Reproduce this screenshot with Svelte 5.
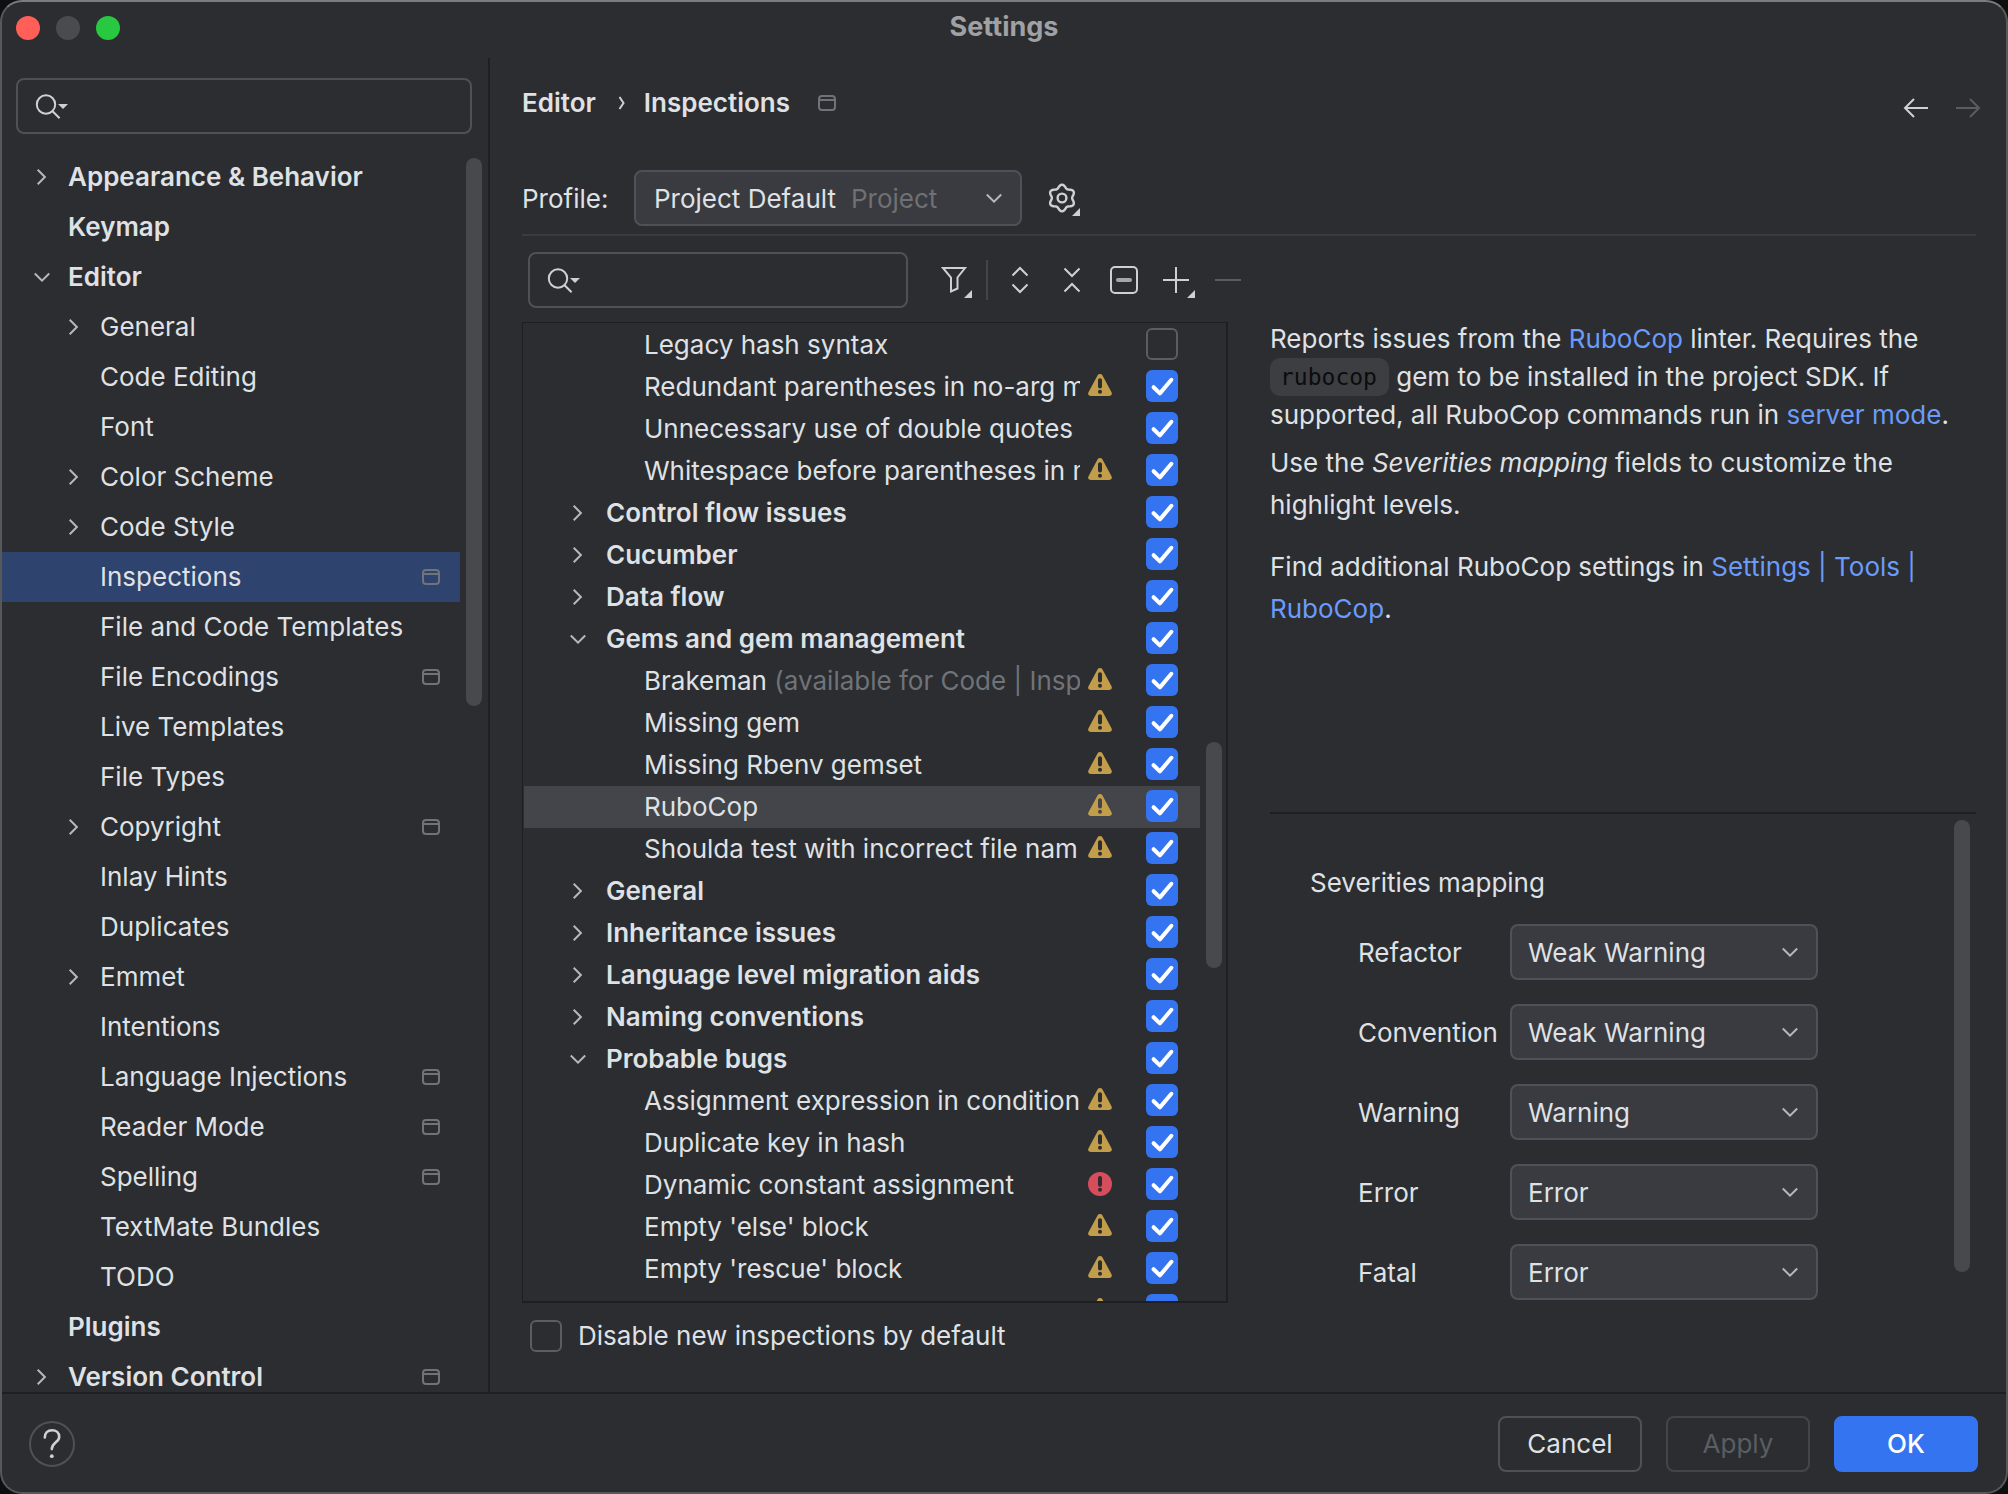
<script lang="ts">
  type NavItem = { label: string; level?: number; open?: boolean; arrow?: boolean; badge?: boolean; selected?: boolean };
  type Inspection = {
    label: string;
    note?: string;
    group?: boolean;
    open?: boolean;
    level?: 'warning' | 'error';
    checked: boolean;
    selected?: boolean;
  };

  const nav: NavItem[] = [
    { label: 'Appearance & Behavior', level: 0, arrow: true },
    { label: 'Keymap', level: 0 },
    { label: 'Editor', level: 0, arrow: true, open: true },
    { label: 'General', arrow: true },
    { label: 'Code Editing' },
    { label: 'Font' },
    { label: 'Color Scheme', arrow: true },
    { label: 'Code Style', arrow: true },
    { label: 'Inspections', badge: true, selected: true },
    { label: 'File and Code Templates' },
    { label: 'File Encodings', badge: true },
    { label: 'Live Templates' },
    { label: 'File Types' },
    { label: 'Copyright', arrow: true, badge: true },
    { label: 'Inlay Hints' },
    { label: 'Duplicates' },
    { label: 'Emmet', arrow: true },
    { label: 'Intentions' },
    { label: 'Language Injections', badge: true },
    { label: 'Reader Mode', badge: true },
    { label: 'Spelling', badge: true },
    { label: 'TextMate Bundles' },
    { label: 'TODO' },
    { label: 'Plugins', level: 0 },
    { label: 'Version Control', level: 0, arrow: true, badge: true }
  ];

  let inspections = $state<Inspection[]>([
    { label: 'Legacy hash syntax', checked: false },
    { label: 'Redundant parentheses in no-arg m', level: 'warning', checked: true },
    { label: 'Unnecessary use of double quotes', checked: true },
    { label: 'Whitespace before parentheses in m', level: 'warning', checked: true },
    { label: 'Control flow issues', group: true, checked: true },
    { label: 'Cucumber', group: true, checked: true },
    { label: 'Data flow', group: true, checked: true },
    { label: 'Gems and gem management', group: true, open: true, checked: true },
    { label: 'Brakeman', note: '(available for Code | Insp', level: 'warning', checked: true },
    { label: 'Missing gem', level: 'warning', checked: true },
    { label: 'Missing Rbenv gemset', level: 'warning', checked: true },
    { label: 'RuboCop', level: 'warning', checked: true, selected: true },
    { label: 'Shoulda test with incorrect file nam', level: 'warning', checked: true },
    { label: 'General', group: true, checked: true },
    { label: 'Inheritance issues', group: true, checked: true },
    { label: 'Language level migration aids', group: true, checked: true },
    { label: 'Naming conventions', group: true, checked: true },
    { label: 'Probable bugs', group: true, open: true, checked: true },
    { label: 'Assignment expression in condition', level: 'warning', checked: true },
    { label: 'Duplicate key in hash', level: 'warning', checked: true },
    { label: 'Dynamic constant assignment', level: 'error', checked: true },
    { label: "Empty 'else' block", level: 'warning', checked: true },
    { label: "Empty 'rescue' block", level: 'warning', checked: true },
    { label: '', level: 'warning', checked: true }
  ]);

  let disableNew = $state(false);

  const levels = ['Error', 'Warning', 'Weak Warning'];
  let severities = $state([
    { name: 'Refactor', value: 'Weak Warning' },
    { name: 'Convention', value: 'Weak Warning' },
    { name: 'Warning', value: 'Warning' },
    { name: 'Error', value: 'Error' },
    { name: 'Fatal', value: 'Error' }
  ]);

  // Six-lobed cog outline around (16, 16), one lobe pointing up.
  const cog =
    'M' +
    Array.from({ length: 72 }, (_, i) => {
      const a = (i / 72) * Math.PI * 2;
      const r = 11.7 + 1.6 * Math.cos(6 * a);
      return `${(16 + r * Math.sin(a)).toFixed(2)} ${(16 - r * Math.cos(a)).toFixed(2)}`;
    }).join('L') +
    'Z';
</script>

{#snippet chevron(open: boolean)}
  <svg class="chev" width="24" height="24" viewBox="0 0 24 24" aria-hidden="true">
    {#if open}<path d="M4.8 8.5 12 15.7 19.2 8.5" />{:else}<path d="M7.7 4.8 14.9 12 7.7 19.2" />{/if}
  </svg>
{/snippet}

{#snippet projectBadge()}
  <svg class="badge" width="20" height="20" viewBox="0 0 20 20" aria-hidden="true">
    <rect x="2" y="3" width="16" height="14" rx="3" /><path d="M2 7h16" />
  </svg>
{/snippet}

{#snippet searchGlyph()}
  <svg class="glyph" width="34" height="28" viewBox="0 0 34 28" aria-hidden="true">
    <circle cx="12" cy="12.5" r="9.2" /><path d="m18.6 19.2 7 7" />
    <path class="fill" d="M24 12h10l-5 5z" />
  </svg>
{/snippet}

{#snippet check(checked: boolean)}
  {#if checked}
    <svg width="32" height="32" viewBox="0 0 32 32" aria-hidden="true"><path d="m7.6 17.2 6.3 6.2L25.4 9.8" /></svg>
  {/if}
{/snippet}

<div class="window">
  <header class="titlebar">
    <div class="lights">
      <button class="light red" aria-label="Close"></button>
      <button class="light grey" aria-label="Minimize" disabled></button>
      <button class="light green" aria-label="Zoom"></button>
    </div>
    <h1>Settings</h1>
  </header>

  <div class="body">
    <aside>
      <div class="search">
        {@render searchGlyph()}
        <input type="text" aria-label="Search settings" />
      </div>
      <div class="navwrap">
        <ul class="nav">
          {#each nav as item}
            <li>
              <button class="navrow" class:top={item.level === 0} class:selected={item.selected}>
                <span class="slot">{#if item.arrow}{@render chevron(!!item.open)}{/if}</span>
                <span class="name">{item.label}</span>
                {#if item.badge}{@render projectBadge()}{/if}
              </button>
            </li>
          {/each}
        </ul>
        <div class="gutter nav-gutter"><div class="thumb"></div></div>
      </div>
    </aside>

    <main>
      <div class="crumbs">
        <strong>Editor</strong>
        <svg class="sep" width="8" height="18" viewBox="0 0 8 18" aria-hidden="true"><path d="m1.5 3 4 6-4 6" /></svg>
        <strong>Inspections</strong>
        {@render projectBadge()}
        <div class="history">
          <button aria-label="Back">
            <svg class="glyph" width="28" height="24" viewBox="0 0 28 24"><path d="M26 12H3M12 3 3 12l9 9" /></svg>
          </button>
          <button aria-label="Forward" disabled>
            <svg class="glyph" width="28" height="24" viewBox="0 0 28 24"><path d="M2 12h23M16 3l9 9-9 9" /></svg>
          </button>
        </div>
      </div>

      <div class="profile">
        <label for="profile">Profile:</label>
        <div class="combo profile-combo">
          <select id="profile"><option>Project Default</option></select>
          <span class="hint">Project</span>
          {@render chevron(true)}
        </div>
        <button class="tool" aria-label="Profile actions">
          <svg class="glyph" width="32" height="32" viewBox="0 0 32 32">
            <path class="thick" d={cog} /><circle class="thick" cx="16" cy="16" r="4.4" />
            <path class="fill" d="M34 26v8h-8z" />
          </svg>
        </button>
      </div>

      <div class="panes">
        <section class="left">
          <div class="toolbar">
            <div class="search">
              {@render searchGlyph()}
              <input type="text" aria-label="Search inspections" />
            </div>
            <button class="tool first" aria-label="Filter">
              <svg class="glyph" width="32" height="32" viewBox="0 0 32 32">
                <path d="M5 4h22l-7.5 9.5v11L13 27.5v-14z" /><path class="fill" d="M34 26v8h-8z" />
              </svg>
            </button>
            <span class="rule"></span>
            <button class="tool" aria-label="Expand all">
              <svg class="glyph" width="32" height="32" viewBox="0 0 32 32"><path d="M8.5 11.5 16 4l7.5 7.5M8.5 20.5 16 28l7.5-7.5" /></svg>
            </button>
            <button class="tool" aria-label="Collapse all">
              <svg class="glyph" width="32" height="32" viewBox="0 0 32 32"><path d="M8.5 4.5 16 12l7.5-7.5M8.5 27.5 16 20l7.5 7.5" /></svg>
            </button>
            <button class="tool" aria-label="Reset to empty">
              <svg class="glyph" width="32" height="32" viewBox="0 0 32 32"><rect x="3" y="3" width="26" height="26" rx="4" /><path class="bar" d="M10 16h12" /></svg>
            </button>
            <button class="tool" aria-label="Add">
              <svg class="glyph" width="32" height="32" viewBox="0 0 32 32"><path d="M16 3v26M3 16h26" /><path class="fill" d="M35 26v8h-8z" /></svg>
            </button>
            <button class="tool" aria-label="Remove" disabled>
              <svg class="glyph" width="32" height="32" viewBox="0 0 32 32"><path d="M3 16h26" /></svg>
            </button>
          </div>

          <div class="table">
            <ul class="rows">
              {#each inspections as row, i}
                <li class:group={row.group} class:selected={row.selected}>
                  <span class="slot">{#if row.group}{@render chevron(!!row.open)}{/if}</span>
                  <label for="inspection-{i}">{row.label}{#if row.note}<span class="note">{' '}{row.note}</span>{/if}</label>
                  <span class="sev">
                    {#if row.level === 'warning'}
                      <svg width="24" height="24" viewBox="0 0 24 24" aria-hidden="true">
                        <path class="warn" d="M9.5 1.5a2.9 2.9 0 0 1 5 0l9 16.8c1 1.7-.2 3.7-2.2 3.7H2.7c-2 0-3.2-2-2.2-3.7z" />
                        <path class="mark" d="M12 6.2v6.4" /><circle class="dot" cx="12" cy="17.8" r="2" />
                      </svg>
                    {:else if row.level === 'error'}
                      <svg width="24" height="24" viewBox="0 0 24 24" aria-hidden="true">
                        <circle class="err" cx="12" cy="12" r="12" />
                        <path class="mark" d="M12 6v6.8" /><circle class="dot" cx="12" cy="17.8" r="2" />
                      </svg>
                    {/if}
                  </span>
                  <span class="check">
                    <input type="checkbox" id="inspection-{i}" aria-label={row.label || 'Inspection'} bind:checked={row.checked} />
                    {@render check(row.checked)}
                  </span>
                </li>
              {/each}
            </ul>
            <div class="gutter table-gutter"><div class="thumb"></div></div>
          </div>

          <label class="disable">
            <span class="check"><input type="checkbox" bind:checked={disableNew} />{@render check(disableNew)}</span>
            Disable new inspections by default
          </label>
        </section>

        <section class="right">
          <article>
            <p class="tight">
              Reports issues from the <a href="#rubocop">RuboCop</a> linter. Requires the
              <code>rubocop</code> gem to be installed in the project SDK. If supported, all RuboCop commands run in
              <a href="#server-mode">server mode</a>.
            </p>
            <p>Use the <em>Severities mapping</em> fields to customize the highlight levels.</p>
            <p>Find additional RuboCop settings in <a href="#settings">Settings | Tools | RuboCop</a>.</p>
          </article>
          <div class="options">
            <div class="form">
              <h2>Severities mapping</h2>
              {#each severities as s}
                <div class="field">
                  <label for="severity-{s.name}">{s.name}</label>
                  <div class="combo">
                    <select id="severity-{s.name}" bind:value={s.value}>
                      {#each levels as l}<option>{l}</option>{/each}
                    </select>
                    {@render chevron(true)}
                  </div>
                </div>
              {/each}
            </div>
            <div class="gutter form-gutter"><div class="thumb"></div></div>
          </div>
        </section>
      </div>
    </main>
  </div>

  <footer>
    <button class="help" aria-label="Help">
      <svg class="glyph" width="20" height="32" viewBox="0 0 20 32">
        <path class="q" d="M2.8 9.5C2.8 5 5.8 2.2 10 2.2s7.2 2.7 7.2 6.7c0 5.3-7.4 5.6-7.4 12.2" /><circle class="fill" cx="9.8" cy="28.2" r="1.9" />
      </svg>
    </button>
    <button class="btn">Cancel</button>
    <button class="btn" disabled>Apply</button>
    <button class="btn primary">OK</button>
  </footer>
</div>

<style>
  :global(body) {
    background: #0e0f11;
  }
  .window,
  .window * {
    box-sizing: border-box;
  }
  .window {
    display: flex;
    flex-direction: column;
    height: 100vh;
    overflow: hidden;
    background: #2b2d30;
    border: 2px solid #57585a;
    border-top-color: #7b7c7e;
    border-radius: 22px;
    color: #dfe1e5;
    font: 26px/32px Inter, 'Liberation Sans', sans-serif;
  }
  button,
  input,
  select {
    font: inherit;
    color: inherit;
    background: none;
    border: 0;
    padding: 0;
    margin: 0;
    outline: none;
  }
  h1,
  h2,
  p,
  ul {
    margin: 0;
    padding: 0;
    list-style: none;
    font-size: inherit;
  }
  h2 {
    font-weight: 400;
  }
  svg {
    display: block;
    flex: none;
    overflow: visible;
    fill: none;
  }
  strong {
    font-weight: 600;
  }
  a {
    color: #6b9bfa;
    text-decoration: none;
  }

  .titlebar {
    display: grid;
    grid-template-columns: 1fr auto 1fr;
    align-items: center;
    height: 56px;
    padding: 0 14px 4px;
    flex: none;
  }
  .titlebar h1 {
    margin-bottom: 2px;
    color: #a0a1a3;
    font-size: 27px;
    font-weight: 700;
  }
  .lights {
    display: flex;
    gap: 16px;
  }
  .light {
    width: 24px;
    height: 24px;
    border-radius: 50%;
  }
  .red {
    background: #ff5f57;
  }
  .grey {
    background: #4a4b4d;
  }
  .green {
    background: #28c840;
  }

  .body {
    display: flex;
    flex: 1;
    min-height: 0;
  }
  aside {
    display: flex;
    flex-direction: column;
    width: 488px;
    flex: none;
    border-right: 2px solid #1e1f22;
  }
  .search {
    display: flex;
    align-items: center;
    gap: 8px;
    height: 56px;
    padding: 0 16px;
    border: 2px solid #4e5157;
    border-radius: 8px;
  }
  .search input {
    flex: 1;
    min-width: 0;
  }
  aside .search {
    margin: 20px 16px 18px 14px;
    flex: none;
  }
  .navwrap {
    display: flex;
    flex: 1;
    min-height: 0;
    overflow: hidden;
  }
  .nav {
    flex: 1;
    min-width: 0;
  }
  .navrow {
    display: flex;
    align-items: center;
    gap: 14px;
    width: 100%;
    height: 50px;
    padding: 0 19px 0 60px;
    text-align: left;
  }
  .navrow.top {
    padding-left: 28px;
    font-weight: 600;
  }
  .navrow.selected {
    background: #2e436e;
  }
  .name {
    flex: 1;
    white-space: nowrap;
  }
  .slot {
    width: 24px;
    flex: none;
  }
  .chev path {
    stroke: #b4b8bf;
    stroke-width: 2;
  }
  .badge rect,
  .badge path {
    stroke: #6f737a;
    stroke-width: 2;
  }
  .glyph {
    stroke: #ced0d6;
    stroke-width: 2;
  }
  .glyph .fill {
    fill: #ced0d6;
    stroke: none;
  }
  .glyph .thick {
    stroke-width: 2.4;
  }
  .glyph .bar {
    stroke-width: 4;
    stroke: #a4a6aa;
    stroke-linecap: round;
  }
  .glyph .q {
    stroke-width: 2.6;
    stroke-linecap: round;
  }
  button:disabled .glyph {
    stroke: #5a5c5e;
  }
  .gutter {
    flex: none;
    width: 28px;
  }
  .thumb {
    width: 16px;
    height: 100%;
    border-radius: 8px;
    background: #48494b;
  }
  .nav-gutter {
    padding: 6px 0 0 6px;
    height: 554px;
  }

  main {
    display: flex;
    flex-direction: column;
    flex: 1;
    min-width: 0;
    padding: 20px 30px 40px 32px;
  }
  .crumbs {
    display: flex;
    align-items: center;
    height: 50px;
    flex: none;
  }
  .crumbs .sep {
    margin: 0 18px 0 22px;
  }
  .sep path {
    stroke: #ced0d6;
    stroke-width: 2;
  }
  .crumbs .badge {
    margin-left: 27px;
  }
  .history {
    display: flex;
    gap: 24px;
    margin: 10px -6px 0 auto;
  }
  .profile {
    display: flex;
    align-items: center;
    height: 108px;
    padding: 42px 0 8px;
    border-bottom: 2px solid #393b40;
    flex: none;
  }
  .profile label {
    width: 112px;
  }
  .profile label,
  .field label,
  .hint {
    padding-top: 2px;
  }
  .combo {
    position: relative;
    display: flex;
    align-items: center;
    height: 56px;
    border: 2px solid #4e5157;
    border-radius: 8px;
    background: #393b40;
  }
  .combo select {
    appearance: none;
    height: 100%;
    width: 100%;
    padding: 2px 0 0 16px;
  }
  .combo option {
    background: #2b2d30;
  }
  .combo .chev {
    position: absolute;
    right: 14px;
    top: 14px;
    pointer-events: none;
  }
  .profile-combo {
    width: 388px;
    margin-right: 24px;
  }
  .profile-combo select {
    width: auto;
    padding-left: 18px;
  }
  .hint {
    margin-left: 15px;
    color: #6f7072;
  }

  .panes {
    display: grid;
    grid-template-columns: minmax(0, 1fr) minmax(0, 1fr);
    gap: 42px;
    flex: 1;
    min-height: 0;
  }
  .left {
    display: flex;
    flex-direction: column;
    min-height: 0;
  }
  .toolbar {
    display: flex;
    align-items: center;
    gap: 20px;
    height: 86px;
    padding: 2px 0 0 6px;
    flex: none;
  }
  .toolbar .search {
    width: 380px;
    flex: none;
  }
  .tool {
    flex: none;
  }
  .tool.first {
    margin-left: 10px;
    margin-right: -4px;
  }
  .rule {
    width: 2px;
    height: 40px;
    margin-right: -4px;
    flex: none;
    background: #43454a;
  }
  .table {
    display: flex;
    flex: 1;
    min-height: 0;
    overflow: hidden;
    border: 2px solid #1e1f22;
    border-width: 1px 2px 2px 1px;
    padding: 1px 0 0 1px;
  }
  .rows {
    flex: 1;
    min-width: 0;
  }
  .rows li {
    display: flex;
    align-items: center;
    height: 42px;
    padding: 0 22px 0 42px;
  }
  .rows label {
    flex: 1;
    min-width: 0;
    margin-left: 54px;
    overflow: hidden;
    white-space: nowrap;
  }
  .rows .group {
    font-weight: 600;
  }
  .rows .group label {
    margin-left: 16px;
  }
  .rows .selected {
    background: #43454a;
    --mark: #43454a;
  }
  .note {
    color: #6f737a;
  }
  .sev {
    width: 24px;
    height: 24px;
    margin: 0 34px 2px 8px;
    flex: none;
  }
  .rows .check {
    margin-bottom: 2px;
  }
  .warn {
    fill: #c29e4a;
  }
  .err {
    fill: #d64d5b;
  }
  .mark {
    stroke: var(--mark, #2b2d30);
    stroke-width: 4;
    stroke-linecap: round;
  }
  .dot {
    fill: var(--mark, #2b2d30);
  }
  .check {
    display: grid;
    flex: none;
    width: 32px;
    height: 32px;
  }
  .check > :global(*) {
    grid-area: 1 / 1;
  }
  .check input {
    appearance: none;
    width: 32px;
    height: 32px;
    border: 2px solid #5a5d63;
    border-radius: 6px;
  }
  .check input:checked {
    border: 0;
    background: #3574f0;
  }
  .check svg {
    pointer-events: none;
  }
  .check svg path {
    stroke: #fff;
    stroke-width: 4;
    stroke-linecap: round;
    stroke-linejoin: round;
  }
  .table-gutter {
    width: 26px;
    height: 644px;
    padding: 418px 0 0 6px;
  }
  .disable {
    display: flex;
    align-items: center;
    gap: 16px;
    padding: 17px 8px 0;
    flex: none;
  }

  .right {
    display: flex;
    flex-direction: column;
    min-height: 0;
  }
  article {
    height: 578px;
    padding-top: 84px;
    flex: none;
    border-bottom: 2px solid #1e1f22;
  }
  article p {
    line-height: 42px;
    margin-bottom: 20px;
  }
  article p.tight {
    line-height: 38px;
    margin-bottom: 8px;
  }
  code {
    display: inline-block;
    height: 38px;
    padding: 0 12px 0 10px;
    border-radius: 10px;
    background: #3c3e41;
    color: #0b0c0d;
    font: 23px/38px 'DejaVu Sans Mono', monospace;
    vertical-align: top;
  }
  .options {
    display: flex;
    flex: 1;
    min-height: 0;
  }
  .form {
    flex: 1;
    padding: 53px 0 0 40px;
  }
  .form h2 {
    margin-bottom: 25px;
  }
  .field {
    display: flex;
    align-items: center;
    height: 56px;
    margin-bottom: 24px;
    padding-left: 48px;
  }
  .field label {
    width: 152px;
    flex: none;
  }
  .field .combo {
    width: 308px;
  }
  .form-gutter {
    padding: 6px 0 0 6px;
    height: 458px;
  }

  footer {
    display: flex;
    align-items: center;
    gap: 24px;
    height: 100px;
    padding: 2px 28px 0 27px;
    border-top: 2px solid #1e1f22;
    flex: none;
  }
  .help {
    display: grid;
    place-items: center;
    width: 46px;
    height: 46px;
    margin-right: auto;
    border: 2px solid #4e5157;
    border-radius: 50%;
  }
  .btn {
    width: 144px;
    height: 56px;
    border: 2px solid #4e5157;
    border-radius: 8px;
  }
  .btn:disabled {
    border-color: #43454a;
    color: #5a5d63;
  }
  .btn.primary {
    border-color: #3574f0;
    background: #3574f0;
    color: #fff;
    font-weight: 500;
  }
</style>
